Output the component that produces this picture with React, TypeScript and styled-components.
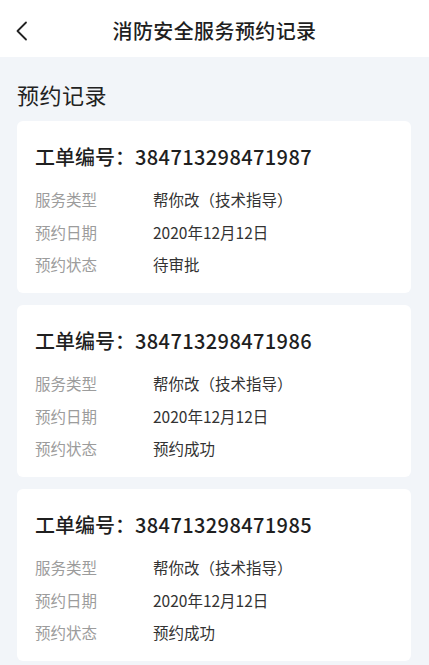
import React, { ReactElement } from 'react';
import styled, { createGlobalStyle } from 'styled-components';

interface Record {
  id: string;
  service: string;
  date: string;
  status: string;
}

const records: Record[] = [
  { id: '384713298471987', service: '帮你改（技术指导）', date: '2020年12月12日', status: '待审批' },
  { id: '384713298471986', service: '帮你改（技术指导）', date: '2020年12月12日', status: '预约成功' },
  { id: '384713298471985', service: '帮你改（技术指导）', date: '2020年12月12日', status: '预约成功' },
];

const GlobalStyle = createGlobalStyle`
  html, body {
    margin: 0;
    padding: 0;
    background: #f2f5f9;
    font-family: "Noto Sans CJK SC", "Noto Sans", sans-serif;
  }
`;

const Page = styled.div`
  width: 429px;
  height: 665px;
  overflow: hidden;
  background: #f2f5f9;
`;

const NavBar = styled.header`
  height: 57px;
  background: #ffffff;
  display: grid;
  grid-template-columns: 48px 1fr 48px;
  align-items: center;
  padding-top: 4px;
  box-sizing: border-box;
`;

const BackButton = styled.button`
  border: none;
  background: none;
  padding: 0 0 0 15px;
  height: 24px;
  display: flex;
  align-items: center;
  cursor: pointer;
`;

const NavTitle = styled.h1`
  margin: 0;
  text-align: center;
  font-size: 20px;
  font-weight: 500;
  color: #1f1f1f;
  letter-spacing: 0.4px;
`;

const Content = styled.main`
  padding: 0 18px 0 17px;
`;

const SectionTitle = styled.h2`
  margin: 0;
  height: 64px;
  line-height: 28px;
  padding-top: 23px;
  box-sizing: border-box;
  font-size: 22px;
  font-weight: 400;
  color: #222222;
  letter-spacing: 0.5px;
`;

const CardList = styled.div`
  display: flex;
  flex-direction: column;
  gap: 12px;
`;

const Card = styled.section`
  background: #ffffff;
  border-radius: 6px;
  height: 172px;
  box-sizing: border-box;
  padding: 22px 18px 0 18px;
`;

const CardTitle = styled.div`
  font-size: 20px;
  line-height: 28px;
  font-weight: 500;
  color: #1f1f1f;
  margin-bottom: 12px;
`;

const Code = styled.span`
  letter-spacing: 0.4px;
`;

const Row = styled.div`
  display: grid;
  grid-template-columns: 118px 1fr;
  height: 32.5px;
  align-items: center;
  font-size: 15.5px;
`;

const Label = styled.span`
  color: #9c9c9c;
`;

const Value = styled.span`
  color: #333333;
`;

const RecordCard: React.FC<{ record: Record }> = ({ record }): ReactElement => (
  <Card>
    <CardTitle>
      工单编号：<Code>{record.id}</Code>
    </CardTitle>
    <Row>
      <Label>服务类型</Label>
      <Value>{record.service}</Value>
    </Row>
    <Row>
      <Label>预约日期</Label>
      <Value>{record.date}</Value>
    </Row>
    <Row>
      <Label>预约状态</Label>
      <Value>{record.status}</Value>
    </Row>
  </Card>
);

const App: React.FC = (): ReactElement => {
  return (
    <Page>
      <GlobalStyle />
      <NavBar>
        <BackButton aria-label="返回">
          <svg width="13" height="20" viewBox="0 0 13 20" fill="none">
            <path d="M11 1.5L2.5 10L11 18.5" stroke="#222" strokeWidth="1.8" strokeLinecap="round" strokeLinejoin="round" />
          </svg>
        </BackButton>
        <NavTitle>消防安全服务预约记录</NavTitle>
        <span />
      </NavBar>
      <Content>
        <SectionTitle>预约记录</SectionTitle>
        <CardList>
          {records.map((r) => (
            <RecordCard key={r.id} record={r} />
          ))}
        </CardList>
      </Content>
    </Page>
  );
};

export default App;
